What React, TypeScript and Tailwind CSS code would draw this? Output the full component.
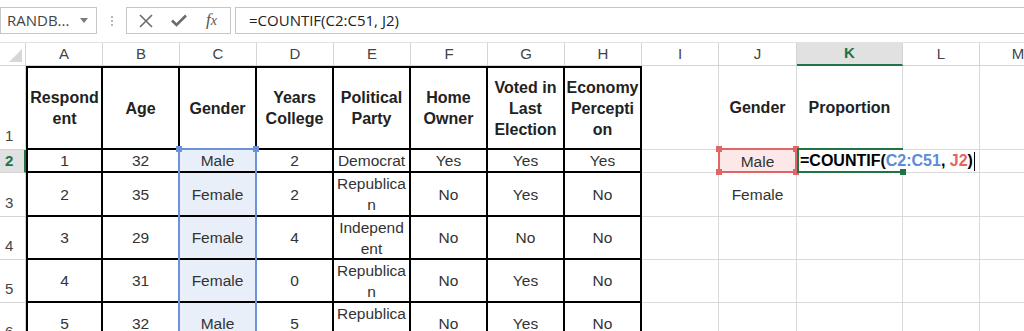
import React from 'react';

const COL_START = [
  'col-start-1', 'col-start-2', 'col-start-3', 'col-start-4', 'col-start-5', 'col-start-6', 'col-start-7',
  'col-start-8', 'col-start-9', 'col-start-10', 'col-start-11', 'col-start-12', 'col-start-13', 'col-start-14',
];
const ROW_START = ['row-start-1', 'row-start-2', 'row-start-3', 'row-start-4', 'row-start-5', 'row-start-6', 'row-start-7'];

const LETTERS = ['', 'A', 'B', 'C', 'D', 'E', 'F', 'G', 'H', 'I', 'J', 'K', 'L', 'M'];

// rows 1..6, columns A..M
const ROWS: string[][] = [
  ['Respond\nent', 'Age', 'Gender', 'Years\nCollege', 'Political\nParty', 'Home\nOwner', 'Voted in\nLast\nElection', 'Economy\nPercepti\non', '', 'Gender', 'Proportion', '', ''],
  ['1', '32', 'Male', '2', 'Democrat', 'Yes', 'Yes', 'Yes', '', 'Male', '', '', ''],
  ['2', '35', 'Female', '2', 'Republica\nn', 'No', 'Yes', 'No', '', 'Female', '', '', ''],
  ['3', '29', 'Female', '4', 'Independ\nent', 'No', 'No', 'No', '', '', '', '', ''],
  ['4', '31', 'Female', '0', 'Republica\nn', 'No', 'Yes', 'No', '', '', '', '', ''],
  ['5', '32', 'Male', '5', 'Republica\nn', 'No', 'Yes', 'No', '', '', '', '', ''],
];

const FormulaBar: React.FC = () => (
  <div className="flex h-[43px] items-start border-b border-[#e2e2e2] bg-white pt-[7px]">
    {/* Name box */}
    <div className="flex h-[27px] w-[97px] items-center justify-between border border-[#c6c6c6] pl-[6px] pr-[8px] font-['Open_Sans',sans-serif] text-[15px] text-[#444]">
      <span>RANDB...</span>
      <svg width="8" height="5" viewBox="0 0 8 5">
        <path d="M0 0h8L4 5z" fill="#7a7a7a" />
      </svg>
    </div>
    <div className="flex h-[27px] w-[29px] flex-col items-center justify-center gap-[2px]">
      <span className="h-[2px] w-[2px] bg-[#b5b5b5]" />
      <span className="h-[2px] w-[2px] bg-[#b5b5b5]" />
      <span className="h-[2px] w-[2px] bg-[#b5b5b5]" />
    </div>
    {/* Cancel / enter / function */}
    <div className="flex h-[27px] w-[105px] items-center border border-[#c6c6c6]">
      <div className="flex w-[37px] justify-center">
        <svg width="14" height="14" viewBox="0 0 14 14">
          <path d="M1 1l12 12M13 1L1 13" stroke="#6b6b6b" strokeWidth="1.6" />
        </svg>
      </div>
      <div className="flex w-[29px] justify-center">
        <svg width="16" height="13" viewBox="0 0 16 13">
          <path d="M1 6.5l4.5 4.5L15 1.5" stroke="#6b6b6b" strokeWidth="2.6" fill="none" />
        </svg>
      </div>
      <div className="flex flex-1 justify-center font-['Liberation_Serif',serif] text-[17px] italic leading-none text-[#555]">
        <span>f</span>
        <span className="text-[14px] leading-[20px]">x</span>
      </div>
    </div>
    <div className="ml-[4px] flex h-[27px] flex-1 items-center border border-r-0 border-[#c6c6c6] pl-[13px] font-['Open_Sans',sans-serif] text-[15px] text-[#222]">
      =COUNTIF(C2:C51, J2)
    </div>
  </div>
);

const Formula: React.FC = () => (
  <div className="flex items-center whitespace-nowrap pl-[3px] text-[16px] font-bold text-black">
    <span>
      =COUNTIF(<span className="text-[#5b8bd9]">C2:C51</span>, <span className="text-[#e06666]">J2</span>)
    </span>
    <span className="ml-px inline-block h-[19px] w-px bg-black" />
  </div>
);

const Handle: React.FC<{ className: string; color: string }> = ({ className, color }) => (
  <span className={`absolute h-[6px] w-[6px] ${color} ${className}`} />
);

const App: React.FC = () => {
  const cells: React.ReactNode[] = [];

  // column header row
  LETTERS.forEach((letter, c) => {
    const pos = `${COL_START[c]} ${ROW_START[0]}`;
    if (c === 0) {
      cells.push(
        <div key="corner" className={`${pos} relative border-r border-b border-[#d4d4d4]`}>
          <svg className="absolute bottom-[3px] right-[3px]" width="13" height="13" viewBox="0 0 13 13">
            <path d="M13 0V13H0z" fill="#d6d6d6" />
          </svg>
        </div>
      );
      return;
    }
    const active = letter === 'K';
    cells.push(
      <div
        key={`h${c}`}
        className={`${pos} flex items-center justify-center border-r border-b border-[#d4d4d4] text-[15px] ${
          active ? 'border-b-2 border-b-[#217346] bg-[#e1e1e1] font-bold text-[#217346]' : 'text-[#444]'
        }`}
      >
        {letter}
      </div>
    );
  });

  ROWS.forEach((row, ri) => {
    const gr = ri + 1;
    const rowNum = ri + 1;
    // row header
    cells.push(
      <div
        key={`r${gr}`}
        className={`${COL_START[0]} ${ROW_START[gr]} flex justify-start pl-[5px] border-r border-b border-[#d4d4d4] text-[15px] ${
          rowNum === 2
            ? 'items-center border-r-2 border-r-[#217346] bg-[#e1e1e1] font-bold text-[#217346]'
            : 'items-end pb-[2px] text-[#444]'
        }`}
      >
        {rowNum}
      </div>
    );

    row.forEach((text, ci) => {
      const c = ci + 1;
      const pos = `${COL_START[c]} ${ROW_START[gr]}`;
      const inTable = c <= 8;
      const isHeader = rowNum === 1;
      let cls = 'flex items-center justify-center text-center whitespace-pre-line leading-[21px]';
      if (inTable) {
        cls += ' border-r-2 border-b-2 border-black';
        if (c === 1) cls += ' border-l-2';
        if (isHeader) cls += ' border-t-2';
        if (c === 3 && !isHeader) cls += ' bg-[#e9eff9]';
      } else if (c === 11 && rowNum === 2) {
        cls += ' border-b border-[#dadada]';
      } else {
        cls += ' border-r border-b border-[#dadada]';
      }
      if (c === 10 && rowNum === 2) cls += ' bg-[#fce8e8]';
      cls += isHeader ? ' text-[16px] font-bold text-[#222]' : ' text-[15.5px] text-[#333]';

      if (c === 11 && rowNum === 2) {
        cells.push(
          <div key={`c${gr}-${c}`} className={`${pos} flex items-center border-b border-[#dadada]`}>
            <Formula />
          </div>
        );
        return;
      }
      cells.push(
        <div key={`c${gr}-${c}`} className={`${pos} ${cls}`}>
          {text}
        </div>
      );
    });
  });

  return (
    <div className="h-[331px] w-[1024px] overflow-hidden bg-white font-['Liberation_Sans',Arial,sans-serif]">
      <FormulaBar />
      <div className="grid grid-cols-[26px_77px_77px_77px_77px_77px_77px_77px_77px_77px_78px_106px_77px_77px] grid-rows-[23px_84px_23px_44px_43px_43px_43px]">
        {cells}

        {/* C2:C51 reference highlight */}
        <div className="pointer-events-none relative z-10 col-start-4 row-start-3 row-span-5 -ml-[2px] -mt-[2px] border-x-2 border-t-2 border-[#6e92d8]">
          <Handle color="bg-[#6e92d8]" className="-left-[4px] -top-[4px]" />
          <Handle color="bg-[#6e92d8]" className="-right-[4px] -top-[4px]" />
        </div>

        {/* J2 reference highlight */}
        <div className="pointer-events-none relative z-10 col-start-11 row-start-3 -ml-px -mt-[2px] border-2 border-[#e06666]">
          <Handle color="bg-[#e06666]" className="-left-[4px] -top-[4px]" />
          <Handle color="bg-[#e06666]" className="-right-[4px] -top-[4px]" />
          <Handle color="bg-[#e06666]" className="-left-[4px] -bottom-[4px]" />
          <Handle color="bg-[#e06666]" className="-right-[4px] -bottom-[4px]" />
        </div>

        {/* K2 active cell */}
        <div className="pointer-events-none relative z-10 col-start-12 row-start-3 -mt-[2px] border-y-2 border-l-2 border-[#217346]">
          <Handle color="bg-[#217346]" className="-right-[3px] -bottom-[4px]" />
        </div>
      </div>
    </div>
  );
};

export default App;
